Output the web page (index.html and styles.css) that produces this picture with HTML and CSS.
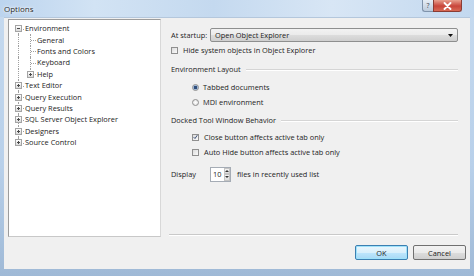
FILE: index.html
```html
<!DOCTYPE html>
<html>
<head>
<meta charset="utf-8">
<link rel="stylesheet" href="styles.css">
</head>
<body>
<div class="window">
  <div class="titlebar">
    <span class="title">Options</span>
    <div class="caption-btns">
      <span class="cbtn help">?</span>
      <span class="cbtn close"><svg width="9" height="8" viewBox="0 0 9 8"><path d="M1.5 1 L7.5 7 M7.5 1 L1.5 7" stroke="#fff" stroke-width="1.8" stroke-linecap="round"/></svg></span>
    </div>
  </div>
  <div class="client">
    <div class="main">
      <div class="tree">
        <div class="row"><span class="cell exp minus first"></span><span class="label">Environment</span></div>
        <div class="row"><span class="cell pipe"></span><span class="cell tee firstc"></span><span class="label sel">General</span></div>
        <div class="row"><span class="cell pipe"></span><span class="cell tee"></span><span class="label">Fonts and Colors</span></div>
        <div class="row"><span class="cell pipe"></span><span class="cell tee"></span><span class="label">Keyboard</span></div>
        <div class="row"><span class="cell pipe"></span><span class="cell exp plus lastc"></span><span class="label">Help</span></div>
        <div class="row"><span class="cell exp plus"></span><span class="label">Text Editor</span></div>
        <div class="row"><span class="cell exp plus"></span><span class="label">Query Execution</span></div>
        <div class="row"><span class="cell exp plus"></span><span class="label">Query Results</span></div>
        <div class="row"><span class="cell exp plus"></span><span class="label">SQL Server Object Explorer</span></div>
        <div class="row"><span class="cell exp plus"></span><span class="label">Designers</span></div>
        <div class="row"><span class="cell exp plus last"></span><span class="label">Source Control</span></div>
      </div>
      <div class="pane">
        <div class="startup">
          <span class="lbl">At startup:</span>
          <div class="combo"><span>Open Object Explorer</span><svg width="5" height="3" viewBox="0 0 5 3"><path d="M0 0H5L2.5 3Z" fill="#111"/></svg></div>
        </div>
        <div class="opt hide"><span class="chk"></span><span>Hide system objects in Object Explorer</span></div>
        <div class="group g1"><span>Environment Layout</span><span class="rule"></span></div>
        <div class="opt sub r1"><span class="radio on"></span><span>Tabbed documents</span></div>
        <div class="opt sub r2"><span class="radio"></span><span>MDI environment</span></div>
        <div class="group g2"><span>Docked Tool Window Behavior</span><span class="rule"></span></div>
        <div class="opt sub c1"><span class="chk checked"><svg width="6" height="6" viewBox="0 0 6 6"><path d="M0.8 3.2 L2.4 4.8 L5.2 0.8" stroke="#2a3f6a" stroke-width="1.1" fill="none"/></svg></span><span>Close button affects active tab only</span></div>
        <div class="opt sub c2"><span class="chk"></span><span>Auto Hide button affects active tab only</span></div>
        <div class="display">
          <span class="lbl">Display</span>
          <div class="spin"><span class="val">10</span><span class="arrows"><span class="up"><svg width="4" height="2" viewBox="0 0 4 2"><path d="M0 2H4L2 0Z" fill="#333"/></svg></span><span class="dn"><svg width="4" height="2" viewBox="0 0 4 2"><path d="M0 0H4L2 2Z" fill="#333"/></svg></span></span></div>
          <span>files in recently used list</span>
        </div>
      </div>
    </div>
    <div class="footer">
      <button class="btn ok">OK</button>
      <button class="btn">Cancel</button>
    </div>
  </div>
</div>
</body>
</html>
```

FILE: styles.css
```css
* { box-sizing: border-box; }
html, body { margin: 0; padding: 0; }
body {
  width: 474px; height: 276px; overflow: hidden;
  font-family: "Open Sans", "Noto Sans", sans-serif;
  font-size: 7.4px; color: #1d1d1d;
  background: #a9c1db;
}
.window {
  width: 474px; height: 276px;
  display: flex; flex-direction: column;
  padding: 0 4px 7px 4px;
  background: linear-gradient(180deg, #c6daef 0%, #b8d0ea 60%, #9fb9d6 100%);
}
.titlebar {
  height: 17px; display: flex; align-items: flex-start; justify-content: space-between;
  margin: 0 -4px; padding: 0 12px 0 4px;
  background: linear-gradient(90deg, #bcd4ee 0%, #d2e3f4 20%, #c4d9ef 45%, #d8e6f5 70%, #c2d8ef 100%);
}
.title { margin-top: 3px; font-size: 8px; color: #2a2a2a; text-shadow: 0 0 4px #fff, 0 0 2px #fff; }
.caption-btns { display: flex; }
.cbtn { height: 12px; display: flex; align-items: center; justify-content: center; border: 1px solid #7f93ab; border-top: none; }
.help { width: 11px; font-size: 7px; color: #445; background: linear-gradient(#e6eef6, #bccbdc); border-radius: 0 0 0 3px; border-right: none; }
.close { width: 29px; background: linear-gradient(#e8a08e, #c8453a 55%, #d86a55); border-color: #8a3c34; border-radius: 0 0 3px 0; }
.client {
  flex: 1; background: #f0f0f0; display: flex; flex-direction: column;
  border-top: 1px solid #b4c7dc;
}
.main { display: flex; height: 219px; }
.tree {
  position: relative; z-index: 0;
  margin: 1px 0 0 4px; width: 153px; height: 218px;
  background: #fff; border: 1px solid #a8a8a8; border-color: #9c9c9c #d8d8d8 #c8c8c8 #9c9c9c;
  padding: 3px 0 0 3px;
}
.row { display: flex; height: 11.4px; align-items: center; white-space: nowrap; }
.label { padding-left: 1px; line-height: 11px; }
.cell { position: relative; width: 12px; height: 100%; flex: none; }
.cell::before { content: ""; position: absolute; left: 6px; top: 0; bottom: 0; border-left: 1px dotted #a0a0a0; z-index: -1; }
.tee::after, .exp::after { content: ""; position: absolute; left: 7px; top: 50%; width: 5px; border-top: 1px dotted #a0a0a0; }
.exp::after { left: 9px; width: 3px; }
.first::before { top: 50%; }
.last::before, .lastc::before { bottom: 50%; }
.plus, .minus { background-repeat: no-repeat; }
.plus {
  background-image:
    linear-gradient(#4b4b4b, #4b4b4b), linear-gradient(#4b4b4b, #4b4b4b),
    linear-gradient(180deg, #fff, #dadada),
    linear-gradient(#a4a4a4, #a4a4a4);
  background-size: 3px 1px, 1px 3px, 5px 5px, 7px 7px;
  background-position: 5px 5.2px, 6px 4.2px, 4px 3.2px, 3px 2.2px;
}
.minus {
  background-image:
    linear-gradient(#4b4b4b, #4b4b4b),
    linear-gradient(180deg, #fff, #dadada),
    linear-gradient(#a4a4a4, #a4a4a4);
  background-size: 3px 1px, 5px 5px, 7px 7px;
  background-position: 5px 5.2px, 4px 3.2px, 3px 2.2px;
}
.pane {
  width: 289px; margin-left: 8px; height: 217px;
  border-bottom: 1px solid #c9c9c9;
  box-shadow: 0 1px 0 #fff;
  display: flex; flex-direction: column; padding-left: 2px;
}
.startup { display: flex; align-items: center; margin-top: 10px; height: 14px; }
.lbl { width: 39px; flex: none; }
.combo {
  flex: 1; height: 14px; display: flex; align-items: center; justify-content: space-between;
  padding: 0 4px 0 4px; border: 1px solid #8e8f8f; border-radius: 2px;
  background: linear-gradient(#f2f2f2, #ebebeb 50%, #dddddd 51%, #cfcfcf);
}
.opt { display: flex; align-items: center; height: 10px; white-space: nowrap; }
.hide { margin-top: 3px; }
.chk { width: 7px; height: 7px; border: 1px solid #8f8f8f; background: linear-gradient(135deg, #dcdcdc, #fafafa); margin-right: 5px; flex: none; display: flex; align-items: center; justify-content: center; }
.chk svg { display: block; }
.radio { width: 7px; height: 7px; border-radius: 50%; border: 1px solid #8f8f8f; background: radial-gradient(#fff, #dcdcdc); margin-right: 4px; flex: none; }
.radio.on { background: radial-gradient(circle, #2e4d7b 0 1.4px, #8fb0d6 1.8px, #d8e4f0 3px); }
.sub { padding-left: 21px; }
.group { display: flex; align-items: center; height: 10px; gap: 5px; white-space: nowrap; }
.rule { flex: 1; border-top: 1px solid #d5d5d5; box-shadow: 0 1px 0 #fff; }
.g1 { margin-top: 9px; }
.r1 { margin-top: 8px; }
.r2 { margin-top: 5px; }
.g2 { margin-top: 8px; }
.c1 { margin-top: 7px; }
.c2 { margin-top: 5px; }
.display { display: flex; align-items: center; margin-top: 9px; height: 16px; white-space: nowrap; }
.spin { width: 21px; height: 15px; border: 1px solid #a5acb5; background: #fff; display: flex; margin-right: 6px; }
.val { flex: 1; padding-left: 2px; line-height: 13px; }
.arrows { width: 6px; display: flex; flex-direction: column; }
.arrows span { flex: 1; display: flex; align-items: center; justify-content: center; background: linear-gradient(#f4f4f4, #dedede); border: 1px solid #c4c4c4; }
.footer { display: flex; justify-content: flex-end; gap: 5px; padding: 8px 4px 0 0; }
.btn {
  width: 53px; height: 15px; font: inherit; font-size: 7.4px; color: #1d1d1d; padding: 0;
  border: 1px solid #707070; border-radius: 2px;
  background: linear-gradient(#f2f2f2, #ebebeb 50%, #dddddd 51%, #cfcfcf);
}
.ok { border-color: #3c7fb1; background: linear-gradient(#eaf6fd, #d9f0fc 50%, #bee6fd 51%, #a7d9f5); box-shadow: inset 0 0 0 1px #9fe2fb; }
```
